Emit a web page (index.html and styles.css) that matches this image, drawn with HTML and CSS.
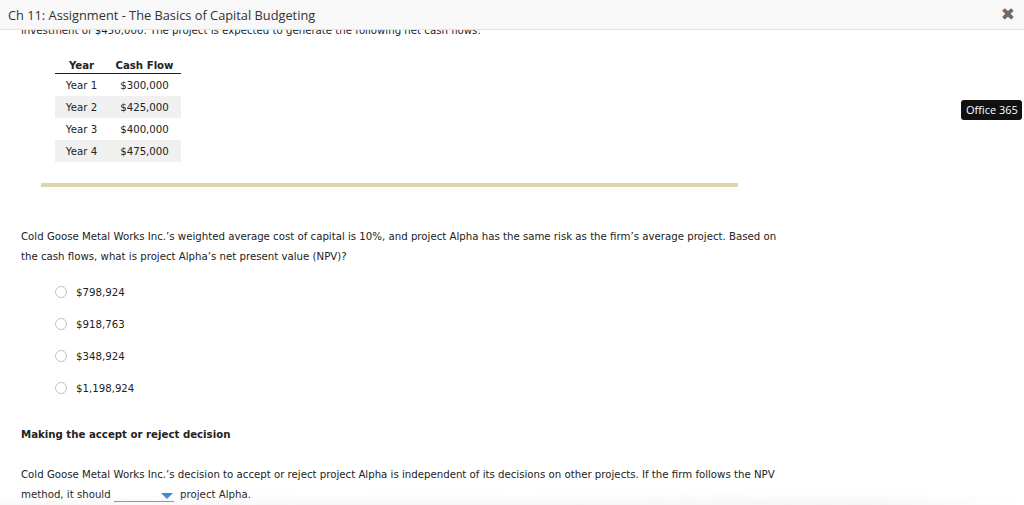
FILE: index.html
```html
<!DOCTYPE html>
<html>
<head>
<meta charset="utf-8">
<link rel="stylesheet" href="styles.css">
</head>
<body>
<div class="header">
  <div class="title">Ch 11: Assignment - The Basics of Capital Budgeting</div>
  <div class="close">&#x2716;</div>
</div>
<div class="content">
  <p class="clipped">investment of $450,000. The project is expected to generate the following net cash flows:</p>
  <table class="cash">
    <thead>
      <tr><th class="c1">Year</th><th class="c2">Cash Flow</th></tr>
    </thead>
    <tbody>
      <tr><td>Year 1</td><td>$300,000</td></tr>
      <tr class="alt"><td>Year 2</td><td>$425,000</td></tr>
      <tr><td>Year 3</td><td>$400,000</td></tr>
      <tr class="alt"><td>Year 4</td><td>$475,000</td></tr>
    </tbody>
  </table>
  <div class="rule"></div>
  <p class="para first">Cold Goose Metal Works Inc.’s weighted average cost of capital is 10%, and project Alpha has the same risk as the firm’s average project. Based on the cash flows, what is project Alpha’s net present value (NPV)?</p>
  <ul class="options">
    <li><span class="radio"></span>$798,924</li>
    <li><span class="radio"></span>$918,763</li>
    <li><span class="radio"></span>$348,924</li>
    <li><span class="radio"></span>$1,198,924</li>
  </ul>
  <h3 class="subhead">Making the accept or reject decision</h3>
  <p class="para second">Cold Goose Metal Works Inc.’s decision to accept or reject project Alpha is independent of its decisions on other projects. If the firm follows the NPV method, it should <span class="select"><span class="caret"></span></span> project Alpha.</p>
  <div class="fade"></div>
</div>
<div class="tooltip">Office 365</div>
</body>
</html>
```
FILE: styles.css
```css
html, body {
  margin: 0;
  padding: 0;
  background: #fff;
}
body {
  width: 1024px;
  height: 505px;
  overflow: hidden;
  position: relative;
  font-family: "DejaVu Sans", Verdana, sans-serif;
  color: #222;
}
.header {
  height: 29px;
  border-bottom: 1px solid #e2e2e2;
  background: #f8f8f8;
  display: flex;
  align-items: center;
  justify-content: space-between;
  padding: 0 9px 0 8px;
  position: relative;
  z-index: 2;
}
.title {
  font-family: "Open Sans", sans-serif;
  font-size: 12.8px;
  color: #333;
}
.close {
  font-family: "DejaVu Sans", sans-serif;
  font-size: 17px;
  color: #6a6a6a;
  line-height: 1;
}
.content {
  height: 475px;
  overflow: hidden;
  padding-left: 21px;
  position: relative;
  font-size: 10.2px;
}
.clipped {
  margin: -6px 0 0 0;
  line-height: 14px;
}
.cash {
  border-collapse: collapse;
  margin: 17px 0 0 34px;
  font-size: 10.2px;
}
.cash th {
  font-weight: bold;
  padding: 4px 0 2px 0;
  border-bottom: 1px solid #222;
  height: 12px;
  text-align: center;
}
.cash .c1 { width: 53px; }
.cash .c2 { width: 73px; }
.cash td {
  padding: 0;
  height: 22px;
  text-align: center;
}
.cash tr.alt td {
  background: #f0f0f0;
}
.rule {
  width: 697px;
  height: 4px;
  background: #ded5aa;
  margin: 21px 0 0 20px;
}
.para {
  margin: 0;
  line-height: 20px;
  width: 765px;
}
.para.first {
  margin-top: 40px;
}
.options {
  list-style: none;
  margin: 9px 0 0 0;
  padding: 0 0 0 34px;
}
.options li {
  height: 32px;
  display: flex;
  align-items: center;
}
.radio {
  width: 10px;
  height: 10px;
  border: 1px solid #c4c4c4;
  border-radius: 50%;
  margin-right: 9px;
  background: #fff;
}
.subhead {
  font-size: 10.2px;
  font-weight: bold;
  margin: 24px 0 0 0;
  line-height: 14px;
}
.para.second {
  margin-top: 23px;
}
.select {
  display: inline-block;
  width: 60px;
  height: 13px;
  border-bottom: 1px solid #4a8fd4;
  vertical-align: -4px;
  position: relative;
  margin-right: 3px;
}
.caret {
  position: absolute;
  right: 1px;
  top: 5px;
  width: 0;
  height: 0;
  border-left: 6px solid transparent;
  border-right: 6px solid transparent;
  border-top: 6px solid #3a87d6;
}
.fade {
  position: absolute;
  left: 0;
  right: 0;
  bottom: 0;
  height: 12px;
  background: linear-gradient(to right, rgba(230,230,230,0.25), rgba(225,225,225,0.35) 85%, rgba(255,255,255,0));
  -webkit-mask-image: linear-gradient(to bottom, transparent, #000);
  mask-image: linear-gradient(to bottom, transparent, #000);
  pointer-events: none;
}
.tooltip {
  position: absolute;
  left: 961px;
  top: 100px;
  background: #111;
  color: #fff;
  font-family: "Open Sans", sans-serif;
  font-size: 11px;
  padding: 2px 4px 2px 5px;
  border-radius: 3px;
  line-height: 16px;
  white-space: nowrap;
}
```
